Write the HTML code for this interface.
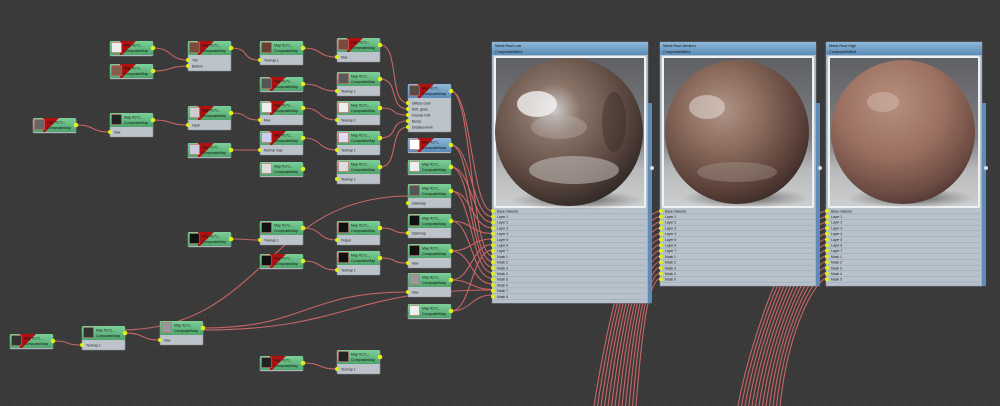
<!DOCTYPE html><html><head><meta charset="utf-8"><style>
html,body{margin:0;padding:0;background:#3b3b3b;width:1000px;height:406px;overflow:hidden}
svg{display:block}
text{font-family:"Liberation Sans",sans-serif}
</style></head><body>
<svg id="s" width="1000" height="406" xmlns="http://www.w3.org/2000/svg">
<defs>
<pattern id="g" width="10" height="10" patternUnits="userSpaceOnUse"><rect width="10" height="10" fill="#3a3a3a"/><circle cx="5" cy="5" r="0.6" fill="#4a4a4a"/></pattern>
<linearGradient id="bg" x1="0" y1="0" x2="0" y2="1"><stop offset="0" stop-color="#5f6063"/><stop offset="0.55" stop-color="#808185"/><stop offset="0.75" stop-color="#b8b9bb"/><stop offset="1" stop-color="#cdcecf"/></linearGradient>
<radialGradient id="sp1" cx="0.4" cy="0.35" r="0.7"><stop offset="0" stop-color="#d0cccb"/><stop offset="0.25" stop-color="#8a7468"/><stop offset="0.7" stop-color="#5a463e"/><stop offset="1" stop-color="#2e2624"/></radialGradient>
<radialGradient id="sp2" cx="0.4" cy="0.35" r="0.7"><stop offset="0" stop-color="#b09487"/><stop offset="0.4" stop-color="#8a6b5d"/><stop offset="0.8" stop-color="#5a4038"/><stop offset="1" stop-color="#3a2a26"/></radialGradient>
<radialGradient id="sp3" cx="0.42" cy="0.3" r="0.75"><stop offset="0" stop-color="#b88f7f"/><stop offset="0.5" stop-color="#9a6f60"/><stop offset="0.85" stop-color="#6a4a42"/><stop offset="1" stop-color="#4a3532"/></radialGradient>
<radialGradient id="sh" cx="0.5" cy="0.5" r="0.5"><stop offset="0" stop-color="#333" stop-opacity="0.8"/><stop offset="1" stop-color="#666" stop-opacity="0"/></radialGradient>
<linearGradient id="hg" x1="0" y1="0" x2="0" y2="1"><stop offset="0" stop-color="#7ccf98"/><stop offset="1" stop-color="#4ea46c"/></linearGradient>
<linearGradient id="hb" x1="0" y1="0" x2="0" y2="1"><stop offset="0" stop-color="#8fb8d8"/><stop offset="1" stop-color="#5a8cb8"/></linearGradient>
</defs>
<rect width="1000" height="406" fill="url(#g)"/>
<g id="wires" fill="none" stroke="#d86a6a" stroke-width="1.1" opacity="0.9"></g>
<g id="nodes"></g>
</svg>
<script>
var W=document.getElementById('wires'),N=document.getElementById('nodes');
var ns='http://www.w3.org/2000/svg';
function el(p,t,a,txt){var e=document.createElementNS(ns,t);for(var k in a)e.setAttribute(k,a[k]);if(txt)e.textContent=txt;p.appendChild(e);return e;}
function wire(x1,y1,x2,y2){var dx=Math.max(20,(x2-x1)*0.5);el(W,'path',{d:'M'+x1+' '+y1+' C'+(x1+dx)+' '+y1+' '+(x2-dx)+' '+y2+' '+x2+' '+y2});}
var nodes=[
[110,41,0,'#eee',1,0],[110,64,0,'#8a5a4a',1,0],[188,41,2,'#7a4a3a',1,0,'Tint','Bottom'],[260,41,1,'#6a4030',0,0,'Texmap 1'],[337,38,1,'#7a4a3a',1,0,'Max'],
[260,77,0,'#555',1,0],[337,72,1,'#5a5a5a',0,0,'Texmap 1'],
[33,118,0,'#666',1,0],[110,113,1,'#222',0,0,'Max'],[188,106,1,'#ccc',1,0,'Input'],[260,101,1,'#eee',1,0,'Max'],[337,101,1,'#eee',0,0,'Texmap 1'],
[188,143,0,'#ccd',1,0],[260,131,1,'#cce',1,0,'Normal map'],[337,131,1,'#dde',0,0,'Texmap 1'],
[260,162,0,'#ddd',0,0],[337,160,1,'#ddd',0,0,'Texmap 1'],
[408,84,5,'#5a4a44',1,1,'Diffuse color','Refl. gloss','Fresnel IOR','Bump','Displacement'],
[408,138,0,'#fff',1,1],[408,160,0,'#eee',0,0],[408,184,1,'#555',0,0,'Darkmap'],
[188,232,0,'#111',1,0],[260,221,1,'#111',0,0,'Texmap 1'],[337,221,1,'#111',0,0,'Output'],[408,214,1,'#111',0,0,'Darkmap'],
[260,254,0,'#111',1,0],[337,251,1,'#111',0,0,'Texmap 1'],[408,244,1,'#111',0,0,'Max'],
[408,273,1,'#999',0,0,'Max'],[408,304,0,'#eee',0,0],
[10,334,0,'#333',1,0],[82,326,1,'#333',0,0,'Texmap 1'],[160,321,1,'#999',0,0,'Max'],
[260,356,0,'#222',1,0],[337,350,1,'#222',0,0,'Texmap 1']
];
var links=[[0,2,0],[1,2,1],[2,3,0],[3,4,0],[5,6,0],[7,8,0],[8,9,0],[9,10,0],[10,11,0],[12,13,0],[13,14,0],[21,22,0],[22,23,0],[23,24,0],[25,26,0],[26,27,0],[30,31,0],[31,32,0],[32,28,0],[33,34,0]];
function pos(n){return {ox:n[0]+43,oy:n[1]+7}}
function ipos(n,r){return {x:n[0],y:n[1]+19+r*6}}
links.forEach(function(l){var a=pos(nodes[l[0]]),b=ipos(nodes[l[1]],l[2]);wire(a.ox,a.oy,b.x,b.y);});
[4,6,11,14,16].forEach(function(i,k){var a=pos(nodes[i]);wire(a.ox,a.oy,408,103+k*6);});
var p1=[17,18,19,20,24,27,28,29,17,18,19,20,24,27,28,29];
for(var k=0;k<16;k++){var a=pos(nodes[p1[k]]);wire(a.ox,a.oy,492,211+k*5.6);}
wire(203,330,492,290);wire(120,330,410,196);
for(var k=0;k<13;k++){
 el(W,'path',{d:'M'+(594+k*3.5)+' 406 C'+(606+k*3)+' 330 '+(630+k*1.5)+' '+(215+k*5.6)+' 660 '+(211+k*5.6)});
 el(W,'path',{d:'M'+(738+k*3.5)+' 406 C'+(752+k*3)+' 330 '+(796+k*1.5)+' '+(215+k*5.6)+' 826 '+(211+k*5.6)});
}
nodes.forEach(function(n){
 var x=n[0],y=n[1],r=n[2],w=43,h=14+(r?r*6+3:0);
 el(N,'rect',{x:x,y:y+1,width:w,height:h,fill:'#bcc3ca',stroke:'#8a9096','stroke-width':0.6,rx:1});
 el(N,'rect',{x:x,y:y,width:w,height:14,fill:n[5]?'url(#hb)':'url(#hg)',rx:1});
 if(n[4]) el(N,'path',{d:'M'+(x+10)+' '+y+'h16l-14 14h-2z',fill:'#b01010'});
 el(N,'rect',{x:x+1.5,y:y+1.5,width:10,height:10,fill:n[3],stroke:'#c66','stroke-width':0.6});
 el(N,'text',{x:x+14,y:y+5.5,'font-size':3.6,fill:'#111'},'Map #171...');
 el(N,'text',{x:x+14,y:y+11,'font-size':3.6,fill:'#111'},'CompositeMap');
 for(var i=0;i<r;i++){el(N,'circle',{cx:x,cy:y+19+i*6,r:2,fill:'#d8f020'});el(N,'text',{x:x+4,y:y+20.5+i*6,'font-size':3.4,fill:'#222'},n[6+i]||'');}
 el(N,'circle',{cx:x+w,cy:y+7,r:2.3,fill:'#d8f020'});
});
[[492,16,'sp1'],[660,13,'sp2'],[826,13,'sp3']].forEach(function(p,idx){
 var x=p[0],w=156,rows=p[1],bot=210+rows*5.7+2;
 el(N,'rect',{x:x+w-1,y:103,width:5,height:bot-103,fill:'#5a8cc0'});
 el(N,'circle',{cx:x+w+4,cy:168,r:2,fill:'#ddd'});
 el(N,'rect',{x:x,y:42,width:w,height:bot-42,fill:'#b8c2cc',stroke:'#7a8590','stroke-width':0.6});
 el(N,'rect',{x:x,y:42,width:w,height:13,fill:'url(#hb)'});
 el(N,'text',{x:x+3,y:47,'font-size':3.8,fill:'#111'},['Metal Rust Low','Metal Rust Medium','Metal Rust High'][idx]);
 el(N,'text',{x:x+3,y:53,'font-size':3.8,fill:'#111'},'CompositeMtl#4');
 el(N,'rect',{x:x+2,y:56,width:w-4,height:152,fill:'#eef2f5',rx:2});
 el(N,'rect',{x:x+4,y:58,width:w-8,height:148,fill:'url(#bg)'});
 var cx=x+w/2-1,cy=132,rr=idx==0?74:72;
 el(N,'ellipse',{cx:cx+8,cy:cy+rr-6,rx:rr*0.9,ry:10,fill:'url(#sh)'});
 el(N,'circle',{cx:cx,cy:cy,r:rr,fill:'url(#'+p[2]+')'});
 if(idx==0){
  el(N,'ellipse',{cx:cx-32,cy:cy-28,rx:20,ry:13,fill:'#f2f2f4',opacity:0.8});
  el(N,'ellipse',{cx:cx-10,cy:cy-5,rx:28,ry:12,fill:'#b8b2b0',opacity:0.4});
  el(N,'ellipse',{cx:cx+5,cy:cy+38,rx:45,ry:14,fill:'#d0ccca',opacity:0.5});
  el(N,'ellipse',{cx:cx+45,cy:cy-10,rx:12,ry:30,fill:'#2a2220',opacity:0.35});}
 if(idx==1){el(N,'ellipse',{cx:cx-30,cy:cy-25,rx:18,ry:12,fill:'#e6dcd6',opacity:0.55});el(N,'ellipse',{cx:cx,cy:cy+40,rx:40,ry:10,fill:'#b0a29c',opacity:0.35});}
 if(idx==2){el(N,'ellipse',{cx:cx-20,cy:cy-30,rx:16,ry:10,fill:'#d8c2b8',opacity:0.45});}
 var labels=['Base material','Layer 1','Layer 2','Layer 3','Layer 4','Layer 5','Layer 6','Layer 7','Mask 1','Mask 2','Mask 3','Mask 4','Mask 5','Mask 6','Mask 7','Mask 8'];
 for(var i=0;i<rows;i++){var yy=211+i*5.7;
  el(N,'line',{x1:x+2,y1:yy+2.8,x2:x+w-2,y2:yy+2.8,stroke:'#9aa4ae','stroke-width':0.5});
  el(N,'circle',{cx:x+1,cy:yy,r:2,fill:'#d8f020'});
  el(N,'text',{x:x+5,y:yy+1.3,'font-size':3.4,fill:'#222'},labels[i]);}
});
</script>
</body></html>
